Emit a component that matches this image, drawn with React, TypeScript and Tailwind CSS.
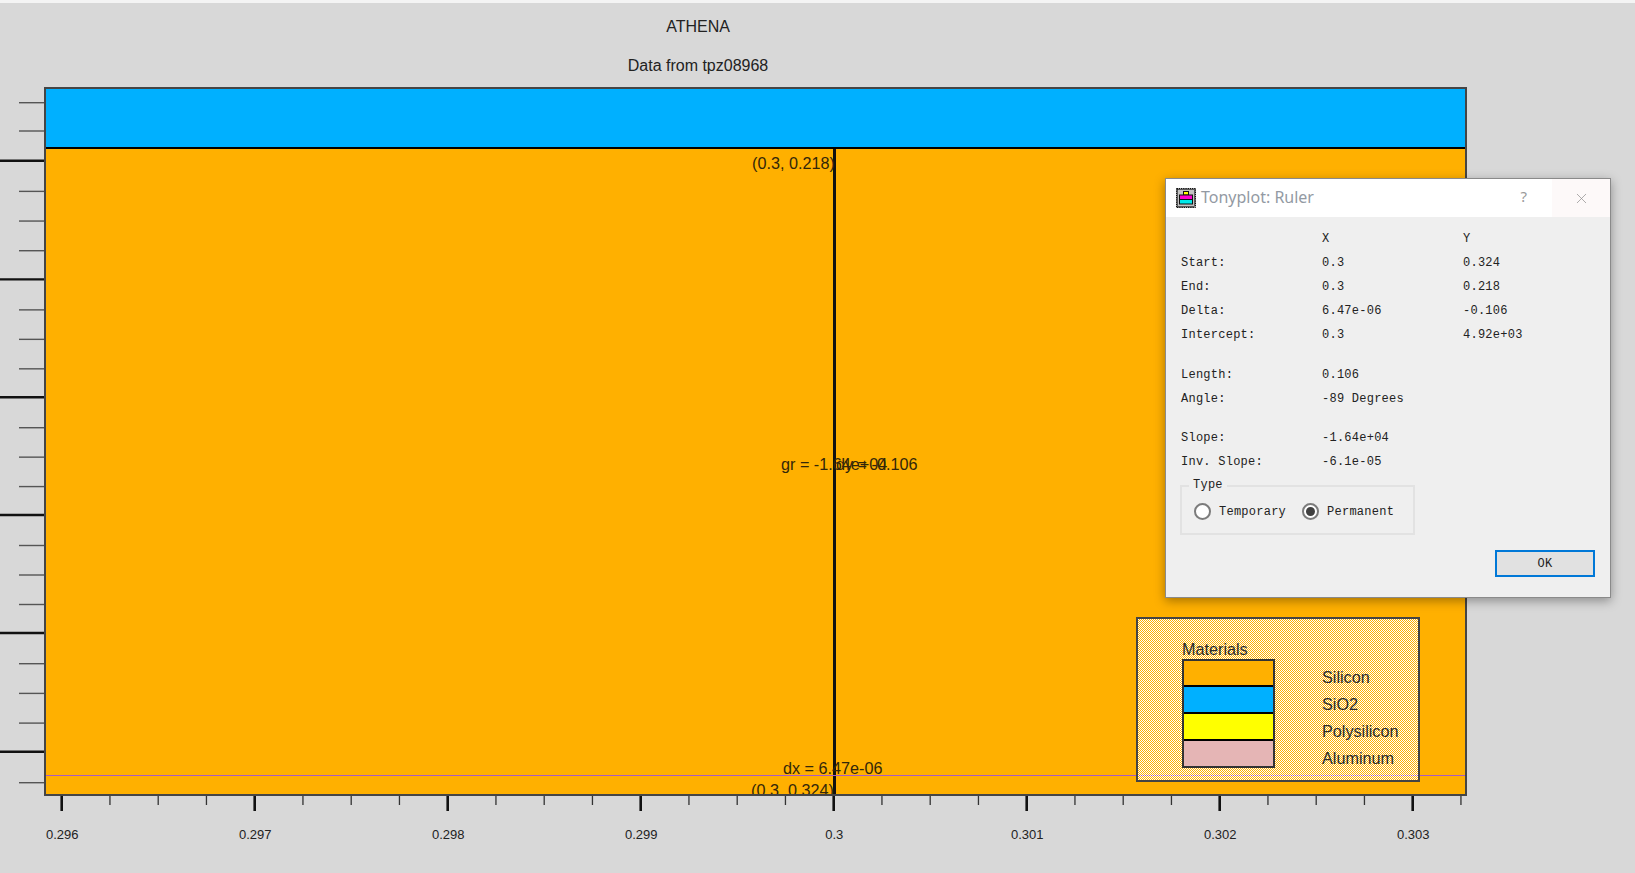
import { X } from 'lucide-react'

const X_MAJOR = [0.296, 0.297, 0.298, 0.299, 0.3, 0.301, 0.302, 0.303]
const X_START = 61.7
const X_STEP = 193

const Y_MAJOR = [73.7, 192.4, 310.3, 428, 546, 664.8]

const READOUT: { label: string; x?: string; y?: string; gap?: string }[] = [
  { label: '', x: 'X', y: 'Y' },
  { label: 'Start:', x: '0.3', y: '0.324' },
  { label: 'End:', x: '0.3', y: '0.218' },
  { label: 'Delta:', x: '6.47e-06', y: '-0.106' },
  { label: 'Intercept:', x: '0.3', y: '4.92e+03' },
  { label: 'Length:', x: '0.106', gap: 'mt-[16px]' },
  { label: 'Angle:', x: '-89 Degrees' },
  { label: 'Slope:', x: '-1.64e+04', gap: 'mt-[15px]' },
  { label: 'Inv. Slope:', x: '-6.1e-05' },
]

const MATERIALS = [
  { name: 'Silicon', swatch: 'h-[26px] border-b-2 border-black bg-[#ffb000]' },
  { name: 'SiO2', swatch: 'h-[27px] border-b-2 border-black bg-[#00b0ff]' },
  { name: 'Polysilicon', swatch: 'h-[27px] border-b-2 border-black bg-[#ffff00]' },
  { name: 'Aluminum', swatch: 'h-[25px] bg-[#e5b5b5]' },
]

function YAxis() {
  const minors: number[] = [15.7, 44]
  Y_MAJOR.forEach((y, i) => {
    if (i < Y_MAJOR.length - 1) {
      const step = (Y_MAJOR[i + 1] - y) / 4
      minors.push(y + step + 1, y + 2 * step + 1, y + 3 * step + 1)
    }
  })
  minors.push(695.7)
  return (
    <svg width="44" height="709" className="shrink-0">
      {minors.map((y) => (
        <line key={y} x1="19" x2="44" y1={y} y2={y} stroke="#555" strokeWidth="1.4" />
      ))}
      {Y_MAJOR.map((y) => (
        <line key={y} x1="0" x2="44" y1={y} y2={y} stroke="#111" strokeWidth="2.4" />
      ))}
    </svg>
  )
}

function XAxis() {
  const minors: number[] = []
  for (let i = 0; i < 7; i++) {
    for (let j = 1; j < 4; j++) minors.push(X_START + i * X_STEP + (j * X_STEP) / 4)
  }
  minors.push(X_START + 7 * X_STEP + X_STEP / 4)
  return (
    <svg width="1635" height="77" className="block">
      {minors.map((x) => (
        <line key={x} x1={x} x2={x} y1="0" y2="9" stroke="#333" strokeWidth="1.3" />
      ))}
      {X_MAJOR.map((v, i) => (
        <g key={v}>
          <line
            x1={X_START + i * X_STEP}
            x2={X_START + i * X_STEP}
            y1="0"
            y2="15"
            stroke="#111"
            strokeWidth="2.6"
          />
          <text
            x={X_START + i * X_STEP + 0.5}
            y="43"
            textAnchor="middle"
            fontSize="13"
            fill="#222"
          >
            {v}
          </text>
        </g>
      ))}
    </svg>
  )
}

function AppIcon() {
  return (
    <svg width="20" height="20" viewBox="0 0 20 20" className="shrink-0">
      <rect x="0.5" y="0.5" width="19" height="19" fill="#c4c4c4" stroke="#111" strokeDasharray="1.5 0.7" />
      <rect x="1.5" y="1.5" width="17" height="17" fill="none" stroke="#111" strokeWidth="0.6" />
      <rect x="7.5" y="3.5" width="5" height="3.5" fill="#ffff00" stroke="#111" />
      <rect x="3.5" y="7" width="13" height="4.5" fill="#ff00d0" stroke="#111" />
      <rect x="3.5" y="11.5" width="13" height="4.5" fill="#00e8e8" stroke="#111" />
    </svg>
  )
}

function Radio({ label, checked }: { label: string; checked?: boolean }) {
  return (
    <div className="flex items-center gap-[8px]">
      <span className="grid h-[17px] w-[17px] place-items-center rounded-full border-2 border-[#7c7c7c] bg-white">
        {checked && <span className="h-[9px] w-[9px] rounded-full bg-[#404040]" />}
      </span>
      <span className="pt-px">{label}</span>
    </div>
  )
}

function RulerDialog() {
  return (
    <div className="absolute left-[1165px] top-[178px] flex h-[420px] w-[446px] flex-col border border-[#8a8a8a] bg-[#efefef] shadow-[0_3px_10px_rgba(0,0,0,0.35)]">
      <div className="flex h-[38px] shrink-0 items-center bg-white pl-[10px]">
        <AppIcon />
        <span className="ml-[5px] pb-[3px] font-['Noto_Sans',sans-serif] text-[16px] text-[#939aa3]">
          Tonyplot: Ruler
        </span>
        <span className="ml-auto mr-[25px] pb-[3px] font-['Noto_Sans',sans-serif] text-[15px] text-[#9a9a9a]">?</span>
        <div className="grid h-full w-[58px] place-items-center bg-[#fdf9f9]">
          <X size={17} strokeWidth={1} className="text-[#8c8c8c]" />
        </div>
      </div>

      <div className="flex flex-1 flex-col pl-[15px] pt-[10px] font-['Liberation_Mono',monospace] text-[12px] tracking-[0.25px] text-[#222]">
        {READOUT.map((row, i) => (
          <div key={i} className={`flex h-6 items-center ${row.gap ?? ''}`}>
            <span className="w-[141px] shrink-0">{row.label}</span>
            <span className="w-[141px] shrink-0">{row.x}</span>
            <span>{row.y}</span>
          </div>
        ))}

        <div className="relative -ml-px mt-[11px] flex h-[50px] w-[235px] items-center gap-[16px] border-2 border-[#e2e2e2] pl-[12px] pt-[2px]">
          <span className="absolute -top-[10px] left-[7px] bg-[#efefef] px-[4px] leading-4">Type</span>
          <Radio label="Temporary" />
          <Radio label="Permanent" checked />
        </div>

        <div className="mt-[15px] flex justify-end pr-[15px]">
          <button className="h-[27px] w-[100px] border-2 border-[#0078d7] bg-[#e1e1e1]">OK</button>
        </div>
      </div>
    </div>
  )
}

function Legend() {
  return (
    <div className="absolute left-[1090px] top-[528px] h-[165px] w-[284px] border-2 border-[#444] bg-[repeating-conic-gradient(transparent_0_25%,#ffffff_0_50%)] bg-[length:2px_2px] pl-[44px] pt-[20px] text-[#2b2b2b]">
      <div className="h-5 leading-5">Materials</div>
      <div className="flex items-start">
        <div className="w-[93px] border-2 border-[#333]">
          {MATERIALS.map((m) => (
            <div key={m.name} className={m.swatch} />
          ))}
        </div>
        <div className="ml-[47px] pt-[4px]">
          {MATERIALS.map((m) => (
            <div key={m.name} className="flex h-[27.3px] items-center">
              {m.name}
            </div>
          ))}
        </div>
      </div>
    </div>
  )
}

function Plot() {
  return (
    <div className="relative flex h-[709px] w-[1423px] flex-col overflow-hidden border-2 border-[#454545] bg-[#ffb000] text-[16.2px] text-[#33270a]">
      <div className="h-[60px] shrink-0 border-b-2 border-black bg-[#00b0ff]" />
      {/* ruler line */}
      <div className="absolute bottom-0 left-[787px] top-[60px] w-[3px] bg-[#111]" />
      {/* thin aluminum layer */}
      <div className="absolute left-0 right-0 top-[686px] h-px bg-[#a85cc4]" />

      <span className="absolute left-[706px] top-[64px] whitespace-nowrap leading-5">(0.3, 0.218)</span>
      <span className="absolute left-[735px] top-[365px] whitespace-nowrap leading-5">gr = -1.64e+04</span>
      <span className="absolute left-[790px] top-[365px] whitespace-nowrap leading-5">dy = -0.106</span>
      <span className="absolute left-[737px] top-[669px] whitespace-nowrap leading-5">dx = 6.47e-06</span>
      <span className="absolute left-[705px] top-[691px] whitespace-nowrap leading-5">(0.3, 0.324)</span>

      <Legend />
    </div>
  )
}

export default function App() {
  return (
    <div className="relative h-[873px] w-[1635px] overflow-hidden bg-[#d8d8d8] font-['Liberation_Sans',sans-serif]">
      <div className="h-[3px] bg-[#f4f4f4]" />
      <div className="flex w-[1396px] flex-col items-center text-[16px] text-[#222]">
        <div className="mt-[12px] h-6 leading-6">ATHENA</div>
        <div className="mb-[9px] mt-[15px] h-6 leading-6">Data from tpz08968</div>
      </div>
      <div className="flex">
        <YAxis />
        <Plot />
      </div>
      <XAxis />
      <RulerDialog />
    </div>
  )
}
